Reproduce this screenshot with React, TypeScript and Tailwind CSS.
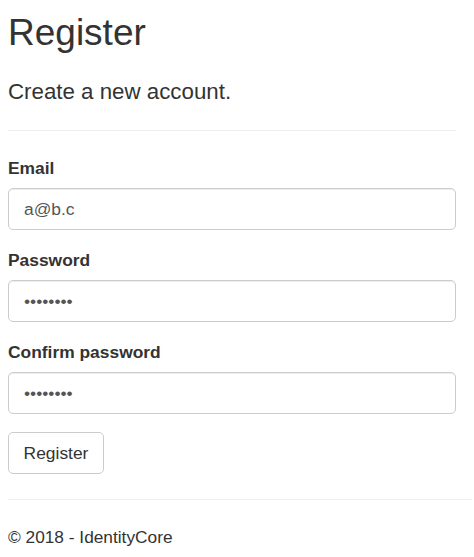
import React from "react";

const Field = ({
  label,
  type,
  value,
}: {
  label: string;
  type: string;
  value: string;
}) => (
  <div className="mb-[18px]">
    <label className="block mb-[8px] text-[17.4px] leading-[24px] font-bold text-[#333]">
      {label}
    </label>
    <input
      type={type}
      defaultValue={value}
      readOnly
      className="block w-full h-[42px] px-[15px] text-[17.4px] text-[#555] bg-white border border-[#ccc] rounded-[5px] shadow-[inset_0_1px_1px_rgba(0,0,0,0.075)] outline-none"
      style={{ fontFamily: "inherit" }}
    />
  </div>
);

export default function App() {
  return (
    <div
      className="min-h-screen bg-white pl-[8px] pr-[2px] text-[#333]"
      style={{ fontFamily: '"Liberation Sans", Arial, sans-serif' }}
    >
      <div className="pr-[16px]">
        <h2 className="pt-[13px] text-[37px] leading-[40px] font-normal">
          Register
        </h2>
        <h4 className="mt-[26px] text-[22.3px] leading-[26px] font-normal">
          Create a new account.
        </h4>
        <hr className="mt-[25px] border-[#eee]" />

        <form className="mt-[25px]" onSubmit={(e) => e.preventDefault()}>
          <Field label="Email" type="email" value="a@b.c" />
          <Field label="Password" type="password" value="12345678" />
          <Field label="Confirm password" type="password" value="12345678" />
          <button
            type="submit"
            className="h-[42px] w-[96px] bg-white border border-[#ccc] rounded-[5px] text-[17.4px] text-[#333]"
          >
            Register
          </button>
        </form>
      </div>

      {/* Footer */}
      <hr className="mt-[25px] border-[#eee]" />
      <footer className="mt-[25px] text-[17.3px] leading-[24px]">
        © 2018 - IdentityCore
      </footer>
    </div>
  );
}
